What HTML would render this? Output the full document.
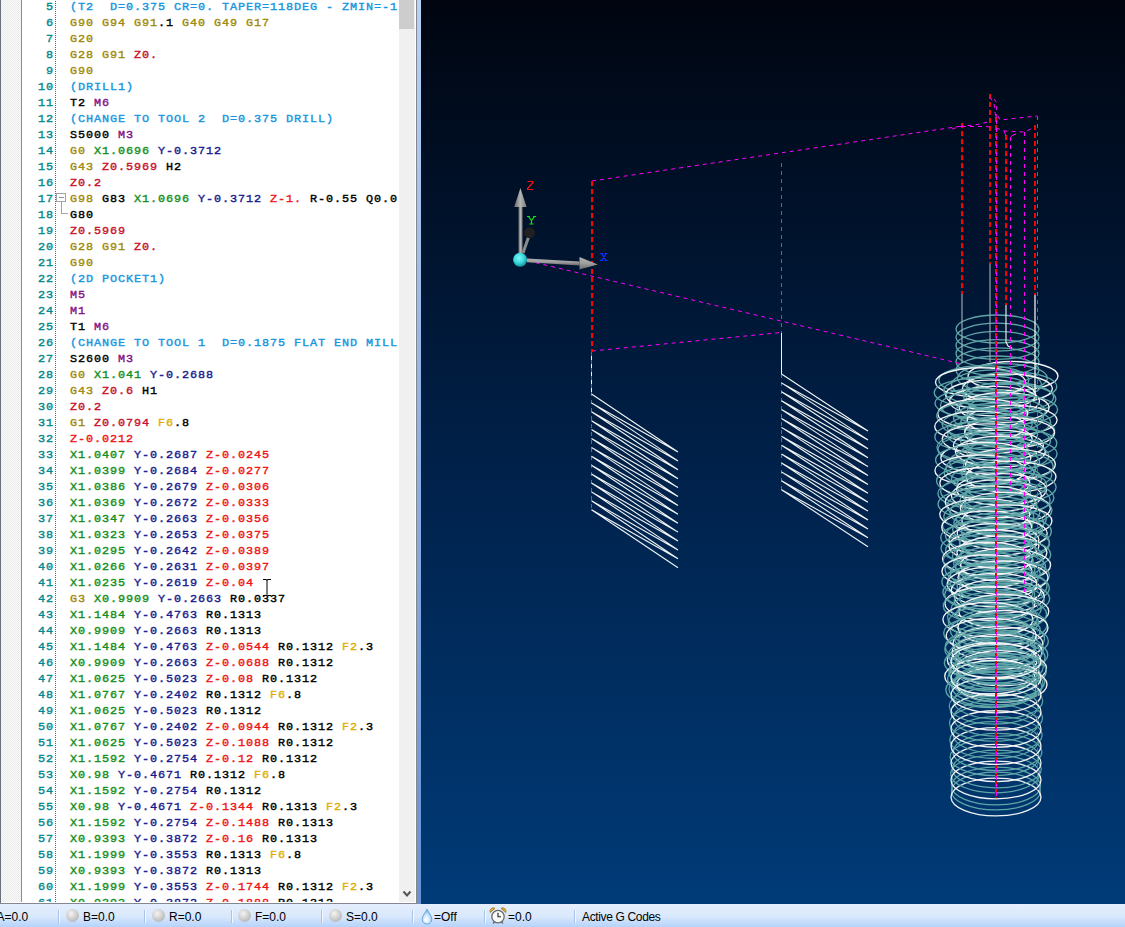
<!DOCTYPE html>
<html><head><meta charset="utf-8">
<style>
html,body{margin:0;padding:0;width:1125px;height:927px;overflow:hidden;background:#fff;}
body{position:relative;font-family:"Liberation Sans",sans-serif;}
#ed{position:absolute;left:0;top:0;width:416px;height:903px;background:#fff;overflow:hidden;}
#edb{position:absolute;left:0;top:0;width:1px;height:904px;background:#6d737c;}
#hatch{position:absolute;left:1px;top:0;width:20px;height:902px;background-color:#fcfcfc;
 background-image:linear-gradient(45deg,#e9e9e9 25%,transparent 25%,transparent 75%,#e9e9e9 75%),linear-gradient(45deg,#e9e9e9 25%,transparent 25%,transparent 75%,#e9e9e9 75%);
 background-size:2px 2px;background-position:0 0,1px 1px;}
#hl{position:absolute;left:21px;top:0;width:1px;height:902px;background:#8c8c8c;}
#dots{position:absolute;left:55px;top:0;width:1px;height:902px;background-image:linear-gradient(#008b8b 50%,transparent 50%);background-size:1px 2px;background-position:0 1px;}
#code{position:absolute;left:0;top:0;width:399px;height:902px;overflow:hidden;}
.ln{position:absolute;left:0;height:16px;white-space:pre;font-family:"Liberation Mono",monospace;font-size:11.8px;letter-spacing:0.92px;line-height:16px;color:#000;font-weight:normal;-webkit-text-stroke:0.4px currentColor}
.ln b{position:absolute;left:22px;width:32px;text-align:right;font-weight:normal;color:#008a8f;top:-1px}
.ln span{position:absolute;left:70px;top:-1px}
i{font-style:normal}
.c{color:#1596e0}
.g{color:#a08a08}
.f{color:#e0b000}
.x{color:#12901a}
.y{color:#1a1a90}
.zp{color:#c8102a}
.zn{color:#f01414}
.m{color:#841184}
#sb{position:absolute;left:399px;top:0;width:16px;height:902px;background:#f0f0f0;}
#thumb{position:absolute;left:0;top:0;width:15px;height:29px;background:#cdcdcd;}
#edbot{position:absolute;left:0;top:903px;width:417px;height:1px;background:#828790;}
#edr{position:absolute;left:416px;top:0;width:1px;height:904px;background:#828790;}
#split{position:absolute;left:417px;top:0;width:4px;height:904px;background:linear-gradient(#b8d2f4,#8db0e4 50%,#6893d0);}
#view{position:absolute;left:421px;top:0;width:704px;height:904px;background:linear-gradient(#000510,#002048 50%,#003b78);border-bottom:0}
#status{position:absolute;left:0;top:904px;width:1125px;height:23px;background:linear-gradient(#e4eefd,#d9e8fc 55%,#c6ddfb 78%,#b5d3fb);font-size:12px;color:#000;}
.st{position:absolute;top:6px;white-space:pre;font-size:12px;line-height:14px;}
.sep{position:absolute;top:6px;width:1px;height:13px;background:#a8c4e8;border-right:1px solid #f4f8fe;}
.dot{position:absolute;top:5px;width:13px;height:13px;border-radius:50%;background:radial-gradient(circle at 40% 35%,#f4f4f4,#c4c4c4 60%,#a8a8a8);}
</style></head><body>
<div id="ed">
 <div id="hatch"></div><div id="hl"></div><div id="dots"></div>
 <div id="code">
<div class="ln" style="top:0px"><b>5</b><span><i class="c">(T2  D=0.375 CR=0. TAPER=118DEG - ZMIN=-1</i></span></div>
<div class="ln" style="top:16px"><b>6</b><span><i class="g">G90</i> <i class="g">G94</i> <i class="g">G91</i>.1 <i class="g">G40</i> <i class="g">G49</i> <i class="g">G17</i></span></div>
<div class="ln" style="top:32px"><b>7</b><span><i class="g">G20</i></span></div>
<div class="ln" style="top:48px"><b>8</b><span><i class="g">G28</i> <i class="g">G91</i> <i class="zp">Z0.</i></span></div>
<div class="ln" style="top:64px"><b>9</b><span><i class="g">G90</i></span></div>
<div class="ln" style="top:80px"><b>10</b><span><i class="c">(DRILL1)</i></span></div>
<div class="ln" style="top:96px"><b>11</b><span>T2 <i class="m">M6</i></span></div>
<div class="ln" style="top:112px"><b>12</b><span><i class="c">(CHANGE TO TOOL 2  D=0.375 DRILL)</i></span></div>
<div class="ln" style="top:128px"><b>13</b><span>S5000 <i class="m">M3</i></span></div>
<div class="ln" style="top:144px"><b>14</b><span><i class="g">G0</i> <i class="x">X1.0696</i> <i class="y">Y-0.3712</i></span></div>
<div class="ln" style="top:160px"><b>15</b><span><i class="g">G43</i> <i class="zp">Z0.5969</i> H2</span></div>
<div class="ln" style="top:176px"><b>16</b><span><i class="zp">Z0.2</i></span></div>
<div class="ln" style="top:192px"><b>17</b><span><i class="g">G98</i> G83 <i class="x">X1.0696</i> <i class="y">Y-0.3712</i> <i class="zn">Z-1.</i> R-0.55 Q0.0</span></div>
<div class="ln" style="top:208px"><b>18</b><span>G80</span></div>
<div class="ln" style="top:224px"><b>19</b><span><i class="zp">Z0.5969</i></span></div>
<div class="ln" style="top:240px"><b>20</b><span><i class="g">G28</i> <i class="g">G91</i> <i class="zp">Z0.</i></span></div>
<div class="ln" style="top:256px"><b>21</b><span><i class="g">G90</i></span></div>
<div class="ln" style="top:272px"><b>22</b><span><i class="c">(2D POCKET1)</i></span></div>
<div class="ln" style="top:288px"><b>23</b><span><i class="m">M5</i></span></div>
<div class="ln" style="top:304px"><b>24</b><span><i class="m">M1</i></span></div>
<div class="ln" style="top:320px"><b>25</b><span>T1 <i class="m">M6</i></span></div>
<div class="ln" style="top:336px"><b>26</b><span><i class="c">(CHANGE TO TOOL 1  D=0.1875 FLAT END MILL</i></span></div>
<div class="ln" style="top:352px"><b>27</b><span>S2600 <i class="m">M3</i></span></div>
<div class="ln" style="top:368px"><b>28</b><span><i class="g">G0</i> <i class="x">X1.041</i> <i class="y">Y-0.2688</i></span></div>
<div class="ln" style="top:384px"><b>29</b><span><i class="g">G43</i> <i class="zp">Z0.6</i> H1</span></div>
<div class="ln" style="top:400px"><b>30</b><span><i class="zp">Z0.2</i></span></div>
<div class="ln" style="top:416px"><b>31</b><span><i class="g">G1</i> <i class="zp">Z0.0794</i> <i class="f">F6</i>.8</span></div>
<div class="ln" style="top:432px"><b>32</b><span><i class="zn">Z-0.0212</i></span></div>
<div class="ln" style="top:448px"><b>33</b><span><i class="x">X1.0407</i> <i class="y">Y-0.2687</i> <i class="zn">Z-0.0245</i></span></div>
<div class="ln" style="top:464px"><b>34</b><span><i class="x">X1.0399</i> <i class="y">Y-0.2684</i> <i class="zn">Z-0.0277</i></span></div>
<div class="ln" style="top:480px"><b>35</b><span><i class="x">X1.0386</i> <i class="y">Y-0.2679</i> <i class="zn">Z-0.0306</i></span></div>
<div class="ln" style="top:496px"><b>36</b><span><i class="x">X1.0369</i> <i class="y">Y-0.2672</i> <i class="zn">Z-0.0333</i></span></div>
<div class="ln" style="top:512px"><b>37</b><span><i class="x">X1.0347</i> <i class="y">Y-0.2663</i> <i class="zn">Z-0.0356</i></span></div>
<div class="ln" style="top:528px"><b>38</b><span><i class="x">X1.0323</i> <i class="y">Y-0.2653</i> <i class="zn">Z-0.0375</i></span></div>
<div class="ln" style="top:544px"><b>39</b><span><i class="x">X1.0295</i> <i class="y">Y-0.2642</i> <i class="zn">Z-0.0389</i></span></div>
<div class="ln" style="top:560px"><b>40</b><span><i class="x">X1.0266</i> <i class="y">Y-0.2631</i> <i class="zn">Z-0.0397</i></span></div>
<div class="ln" style="top:576px"><b>41</b><span><i class="x">X1.0235</i> <i class="y">Y-0.2619</i> <i class="zn">Z-0.04</i></span></div>
<div class="ln" style="top:592px"><b>42</b><span><i class="g">G3</i> <i class="x">X0.9909</i> <i class="y">Y-0.2663</i> R0.0337</span></div>
<div class="ln" style="top:608px"><b>43</b><span><i class="x">X1.1484</i> <i class="y">Y-0.4763</i> R0.1313</span></div>
<div class="ln" style="top:624px"><b>44</b><span><i class="x">X0.9909</i> <i class="y">Y-0.2663</i> R0.1313</span></div>
<div class="ln" style="top:640px"><b>45</b><span><i class="x">X1.1484</i> <i class="y">Y-0.4763</i> <i class="zn">Z-0.0544</i> R0.1312 <i class="f">F2</i>.3</span></div>
<div class="ln" style="top:656px"><b>46</b><span><i class="x">X0.9909</i> <i class="y">Y-0.2663</i> <i class="zn">Z-0.0688</i> R0.1312</span></div>
<div class="ln" style="top:672px"><b>47</b><span><i class="x">X1.0625</i> <i class="y">Y-0.5023</i> <i class="zn">Z-0.08</i> R0.1312</span></div>
<div class="ln" style="top:688px"><b>48</b><span><i class="x">X1.0767</i> <i class="y">Y-0.2402</i> R0.1312 <i class="f">F6</i>.8</span></div>
<div class="ln" style="top:704px"><b>49</b><span><i class="x">X1.0625</i> <i class="y">Y-0.5023</i> R0.1312</span></div>
<div class="ln" style="top:720px"><b>50</b><span><i class="x">X1.0767</i> <i class="y">Y-0.2402</i> <i class="zn">Z-0.0944</i> R0.1312 <i class="f">F2</i>.3</span></div>
<div class="ln" style="top:736px"><b>51</b><span><i class="x">X1.0625</i> <i class="y">Y-0.5023</i> <i class="zn">Z-0.1088</i> R0.1312</span></div>
<div class="ln" style="top:752px"><b>52</b><span><i class="x">X1.1592</i> <i class="y">Y-0.2754</i> <i class="zn">Z-0.12</i> R0.1312</span></div>
<div class="ln" style="top:768px"><b>53</b><span><i class="x">X0.98</i> <i class="y">Y-0.4671</i> R0.1312 <i class="f">F6</i>.8</span></div>
<div class="ln" style="top:784px"><b>54</b><span><i class="x">X1.1592</i> <i class="y">Y-0.2754</i> R0.1312</span></div>
<div class="ln" style="top:800px"><b>55</b><span><i class="x">X0.98</i> <i class="y">Y-0.4671</i> <i class="zn">Z-0.1344</i> R0.1313 <i class="f">F2</i>.3</span></div>
<div class="ln" style="top:816px"><b>56</b><span><i class="x">X1.1592</i> <i class="y">Y-0.2754</i> <i class="zn">Z-0.1488</i> R0.1313</span></div>
<div class="ln" style="top:832px"><b>57</b><span><i class="x">X0.9393</i> <i class="y">Y-0.3872</i> <i class="zn">Z-0.16</i> R0.1313</span></div>
<div class="ln" style="top:848px"><b>58</b><span><i class="x">X1.1999</i> <i class="y">Y-0.3553</i> R0.1313 <i class="f">F6</i>.8</span></div>
<div class="ln" style="top:864px"><b>59</b><span><i class="x">X0.9393</i> <i class="y">Y-0.3872</i> R0.1313</span></div>
<div class="ln" style="top:880px"><b>60</b><span><i class="x">X1.1999</i> <i class="y">Y-0.3553</i> <i class="zn">Z-0.1744</i> R0.1312 <i class="f">F2</i>.3</span></div>
<div class="ln" style="top:896px"><b>61</b><span><i class="x">X0.9393</i> <i class="y">Y-0.3872</i> <i class="zn">Z-0.1888</i> R0.1312</span></div>
 </div>
 <div id="sb"><div id="thumb"></div><svg style="position:absolute;left:3px;top:889px" width="10" height="10" viewBox="0 0 10 10"><path d="M1.5 2.5 L5 6.5 L8.5 2.5" fill="none" stroke="#555" stroke-width="2"/></svg></div>
 <div style="position:absolute;left:56px;top:193px;width:8px;height:7px;border:1px solid #a4a4a4;background:#fff"></div>
 <div style="position:absolute;left:59px;top:197px;width:5px;height:1px;background:#909090"></div>
 <div style="position:absolute;left:61px;top:202px;width:6px;height:11px;border-left:1px solid #a4a4a4;border-bottom:1px solid #a4a4a4"></div>
 <svg style="position:absolute;left:262px;top:578px" width="10" height="20" viewBox="0 0 10 20"><path d="M1 1.5h3.5M5.5 1.5H9M4.5 1.5Q5 2 5 3v13.5Q5 17 4.5 17.5M5 3Q5 2 5.5 1.5M1 17.5h3.5M5.5 17.5H9" fill="none" stroke="#000" stroke-width="1"/></svg>
</div>
<div id="edb"></div>
<div id="edbot"></div><div id="edr"></div>
<div id="split"></div>
<div id="view"><svg width="704" height="903" viewBox="421 0 704 903" style="position:absolute;left:0;top:0"><ellipse cx="997.5" cy="329.0" rx="41.5" ry="14" fill="none" stroke="#5fa6a8" stroke-width="1.3" opacity="1"/><ellipse cx="997.5" cy="337.2" rx="41.5" ry="14" fill="none" stroke="#5fa6a8" stroke-width="1.3" opacity="1"/><ellipse cx="997.5" cy="345.4" rx="41.5" ry="14" fill="none" stroke="#5fa6a8" stroke-width="1.3" opacity="1"/><ellipse cx="997.5" cy="353.6" rx="41.5" ry="14" fill="none" stroke="#5fa6a8" stroke-width="1.3" opacity="1"/><ellipse cx="997.5" cy="361.8" rx="41.5" ry="14" fill="none" stroke="#5fa6a8" stroke-width="1.3" opacity="1"/><ellipse cx="997.5" cy="370.0" rx="41.5" ry="14" fill="none" stroke="#5fa6a8" stroke-width="1.3" opacity="1"/><ellipse cx="1013.0" cy="376.0" rx="45" ry="14.5" fill="none" stroke="#f0f4f4" stroke-width="1.35" opacity="1"/><ellipse cx="1002.4" cy="378.1" rx="45" ry="14.522287735849057" fill="none" stroke="#5fa6a8" stroke-width="1.35" opacity="1"/><ellipse cx="983.8" cy="380.2" rx="45" ry="14.544575471698113" fill="none" stroke="#5fa6a8" stroke-width="1.35" opacity="1"/><ellipse cx="980.5" cy="382.3" rx="45" ry="14.56686320754717" fill="none" stroke="#f0f4f4" stroke-width="1.35" opacity="1"/><ellipse cx="996.5" cy="384.4" rx="45" ry="14.589150943396227" fill="none" stroke="#5fa6a8" stroke-width="1.35" opacity="1"/><ellipse cx="1011.8" cy="386.5" rx="45" ry="14.611438679245284" fill="none" stroke="#5fa6a8" stroke-width="1.35" opacity="1"/><ellipse cx="1007.4" cy="388.6" rx="45" ry="14.63372641509434" fill="none" stroke="#f0f4f4" stroke-width="1.35" opacity="1"/><ellipse cx="988.7" cy="390.7" rx="45" ry="14.656014150943397" fill="none" stroke="#5fa6a8" stroke-width="1.35" opacity="1"/><ellipse cx="979.2" cy="392.8" rx="45" ry="14.678301886792454" fill="none" stroke="#5fa6a8" stroke-width="1.35" opacity="1"/><ellipse cx="990.6" cy="394.9" rx="45" ry="14.700589622641512" fill="none" stroke="#f0f4f4" stroke-width="1.35" opacity="1"/><ellipse cx="1008.7" cy="397.0" rx="45" ry="14.72287735849057" fill="none" stroke="#5fa6a8" stroke-width="1.35" opacity="1"/><ellipse cx="1010.9" cy="399.1" rx="45" ry="14.745165094339626" fill="none" stroke="#5fa6a8" stroke-width="1.35" opacity="1"/><ellipse cx="994.5" cy="401.2" rx="45" ry="14.767452830188683" fill="none" stroke="#f0f4f4" stroke-width="1.35" opacity="1"/><ellipse cx="980.0" cy="403.3" rx="45" ry="14.78974056603774" fill="none" stroke="#5fa6a8" stroke-width="1.35" opacity="1"/><ellipse cx="985.5" cy="405.4" rx="45" ry="14.812028301886796" fill="none" stroke="#5fa6a8" stroke-width="1.35" opacity="1"/><ellipse cx="1004.1" cy="407.5" rx="45" ry="14.834316037735853" fill="none" stroke="#f0f4f4" stroke-width="1.35" opacity="1"/><ellipse cx="1012.6" cy="409.6" rx="45" ry="14.85660377358491" fill="none" stroke="#5fa6a8" stroke-width="1.35" opacity="1"/><ellipse cx="1000.4" cy="411.7" rx="45" ry="14.878891509433966" fill="none" stroke="#5fa6a8" stroke-width="1.35" opacity="1"/><ellipse cx="982.8" cy="413.8" rx="45" ry="14.901179245283023" fill="none" stroke="#f0f4f4" stroke-width="1.35" opacity="1"/><ellipse cx="981.7" cy="415.9" rx="45" ry="14.92346698113208" fill="none" stroke="#5fa6a8" stroke-width="1.35" opacity="1"/><ellipse cx="998.5" cy="418.0" rx="45" ry="14.945754716981137" fill="none" stroke="#5fa6a8" stroke-width="1.35" opacity="1"/><ellipse cx="1012.1" cy="420.1" rx="45" ry="14.968042452830193" fill="none" stroke="#f0f4f4" stroke-width="1.35" opacity="1"/><ellipse cx="1005.7" cy="422.2" rx="45" ry="14.99033018867925" fill="none" stroke="#5fa6a8" stroke-width="1.35" opacity="1"/><ellipse cx="987.2" cy="424.3" rx="45" ry="15.012617924528307" fill="none" stroke="#5fa6a8" stroke-width="1.35" opacity="1"/><ellipse cx="979.7" cy="426.4" rx="45" ry="15.034905660377364" fill="none" stroke="#f0f4f4" stroke-width="1.35" opacity="1"/><ellipse cx="992.6" cy="428.5" rx="45" ry="15.05719339622642" fill="none" stroke="#5fa6a8" stroke-width="1.35" opacity="1"/><ellipse cx="1009.7" cy="430.6" rx="45" ry="15.079481132075477" fill="none" stroke="#5fa6a8" stroke-width="1.35" opacity="1"/><ellipse cx="1009.6" cy="432.7" rx="45" ry="15.101768867924536" fill="none" stroke="#f0f4f4" stroke-width="1.35" opacity="1"/><ellipse cx="992.6" cy="434.8" rx="45" ry="15.124056603773592" fill="none" stroke="#5fa6a8" stroke-width="1.35" opacity="1"/><ellipse cx="979.8" cy="436.9" rx="45" ry="15.14634433962265" fill="none" stroke="#5fa6a8" stroke-width="1.35" opacity="1"/><ellipse cx="987.2" cy="439.0" rx="45" ry="15.168632075471706" fill="none" stroke="#f0f4f4" stroke-width="1.35" opacity="1"/><ellipse cx="1005.5" cy="441.1" rx="45" ry="15.190919811320763" fill="none" stroke="#5fa6a8" stroke-width="1.35" opacity="1"/><ellipse cx="1011.9" cy="443.2" rx="45" ry="15.21320754716982" fill="none" stroke="#5fa6a8" stroke-width="1.35" opacity="1"/><ellipse cx="998.4" cy="445.3" rx="45" ry="15.235495283018876" fill="none" stroke="#f0f4f4" stroke-width="1.35" opacity="1"/><ellipse cx="982.0" cy="447.4" rx="45" ry="15.257783018867933" fill="none" stroke="#5fa6a8" stroke-width="1.35" opacity="1"/><ellipse cx="983.0" cy="449.5" rx="45" ry="15.28007075471699" fill="none" stroke="#5fa6a8" stroke-width="1.35" opacity="1"/><ellipse cx="1000.3" cy="451.6" rx="45" ry="15.302358490566046" fill="none" stroke="#f0f4f4" stroke-width="1.35" opacity="1"/><ellipse cx="1012.1" cy="453.7" rx="45" ry="15.324646226415103" fill="none" stroke="#5fa6a8" stroke-width="1.35" opacity="1"/><ellipse cx="1003.8" cy="455.8" rx="45" ry="15.34693396226416" fill="none" stroke="#5fa6a8" stroke-width="1.35" opacity="1"/><ellipse cx="985.8" cy="457.9" rx="45" ry="15.369221698113217" fill="none" stroke="#f0f4f4" stroke-width="1.35" opacity="1"/><ellipse cx="980.5" cy="460.0" rx="45" ry="15.391509433962273" fill="none" stroke="#5fa6a8" stroke-width="1.35" opacity="1"/><ellipse cx="994.6" cy="462.1" rx="45" ry="15.41379716981133" fill="none" stroke="#5fa6a8" stroke-width="1.35" opacity="1"/><ellipse cx="1010.4" cy="464.2" rx="45" ry="15.436084905660387" fill="none" stroke="#f0f4f4" stroke-width="1.35" opacity="1"/><ellipse cx="1008.2" cy="466.3" rx="45" ry="15.458372641509444" fill="none" stroke="#5fa6a8" stroke-width="1.35" opacity="1"/><ellipse cx="990.8" cy="468.4" rx="45" ry="15.4806603773585" fill="none" stroke="#5fa6a8" stroke-width="1.35" opacity="1"/><ellipse cx="979.9" cy="470.5" rx="45" ry="15.502948113207559" fill="none" stroke="#f0f4f4" stroke-width="1.35" opacity="1"/><ellipse cx="989.1" cy="472.6" rx="45" ry="15.525235849056616" fill="none" stroke="#5fa6a8" stroke-width="1.35" opacity="1"/><ellipse cx="1006.8" cy="474.7" rx="45" ry="15.547523584905672" fill="none" stroke="#5fa6a8" stroke-width="1.35" opacity="1"/><ellipse cx="1011.0" cy="476.8" rx="45" ry="15.569811320754729" fill="none" stroke="#f0f4f4" stroke-width="1.35" opacity="1"/><ellipse cx="996.5" cy="478.9" rx="45" ry="15.592099056603786" fill="none" stroke="#5fa6a8" stroke-width="1.35" opacity="1"/><ellipse cx="981.5" cy="481.0" rx="45" ry="15.614386792452843" fill="none" stroke="#5fa6a8" stroke-width="1.35" opacity="1"/><ellipse cx="984.8" cy="483.1" rx="45" ry="15.6366745283019" fill="none" stroke="#f0f4f4" stroke-width="1.35" opacity="1"/><ellipse cx="1001.8" cy="485.2" rx="45" ry="15.658962264150956" fill="none" stroke="#5fa6a8" stroke-width="1.35" opacity="1"/><ellipse cx="1011.1" cy="487.3" rx="45" ry="15.681250000000013" fill="none" stroke="#5fa6a8" stroke-width="1.35" opacity="1"/><ellipse cx="1001.6" cy="489.4" rx="45" ry="15.70353773584907" fill="none" stroke="#f0f4f4" stroke-width="1.35" opacity="1"/><ellipse cx="985.6" cy="491.5" rx="45" ry="15.725825471698126" fill="none" stroke="#5fa6a8" stroke-width="1.35" opacity="1"/><ellipse cx="982.9" cy="493.6" rx="45" ry="15.748113207547183" fill="none" stroke="#5fa6a8" stroke-width="1.35" opacity="1"/><ellipse cx="996.4" cy="495.7" rx="45" ry="15.77040094339624" fill="none" stroke="#f0f4f4" stroke-width="1.35" opacity="1"/><ellipse cx="1008.9" cy="497.8" rx="45" ry="15.792688679245297" fill="none" stroke="#5fa6a8" stroke-width="1.35" opacity="1"/><ellipse cx="1005.1" cy="499.9" rx="45" ry="15.814976415094353" fill="none" stroke="#5fa6a8" stroke-width="1.35" opacity="1"/><ellipse cx="990.3" cy="502.0" rx="45" ry="15.83726415094341" fill="none" stroke="#f0f4f4" stroke-width="1.35" opacity="1"/><ellipse cx="983.0" cy="504.1" rx="45" ry="15.859551886792467" fill="none" stroke="#5fa6a8" stroke-width="1.35" opacity="1"/><ellipse cx="991.9" cy="506.2" rx="45" ry="15.881839622641525" fill="none" stroke="#5fa6a8" stroke-width="1.35" opacity="1"/><ellipse cx="1005.4" cy="508.3" rx="45" ry="15.90412735849058" fill="none" stroke="#f0f4f4" stroke-width="1.35" opacity="1"/><ellipse cx="1006.9" cy="510.4" rx="45" ry="15.926415094339639" fill="none" stroke="#5fa6a8" stroke-width="1.35" opacity="1"/><ellipse cx="994.9" cy="512.5" rx="45" ry="15.948702830188696" fill="none" stroke="#5fa6a8" stroke-width="1.35" opacity="1"/><ellipse cx="984.8" cy="514.6" rx="45" ry="15.970990566037752" fill="none" stroke="#f0f4f4" stroke-width="1.35" opacity="1"/><ellipse cx="988.8" cy="516.7" rx="45" ry="15.993278301886809" fill="none" stroke="#5fa6a8" stroke-width="1.35" opacity="1"/><ellipse cx="1001.4" cy="518.8" rx="45" ry="16.015566037735866" fill="none" stroke="#5fa6a8" stroke-width="1.35" opacity="1"/><ellipse cx="1006.9" cy="520.9" rx="45" ry="16.03785377358492" fill="none" stroke="#f0f4f4" stroke-width="1.35" opacity="1"/><ellipse cx="998.9" cy="523.0" rx="45" ry="16.06014150943398" fill="none" stroke="#5fa6a8" stroke-width="1.35" opacity="1"/><ellipse cx="987.4" cy="525.1" rx="45" ry="16.082429245283038" fill="none" stroke="#5fa6a8" stroke-width="1.35" opacity="1"/><ellipse cx="986.7" cy="527.2" rx="45" ry="16.104716981132093" fill="none" stroke="#f0f4f4" stroke-width="1.35" opacity="1"/><ellipse cx="997.6" cy="529.3" rx="45" ry="16.12700471698115" fill="none" stroke="#5fa6a8" stroke-width="1.35" opacity="1"/><ellipse cx="1006.4" cy="531.4" rx="45" ry="16.149292452830206" fill="none" stroke="#5fa6a8" stroke-width="1.35" opacity="1"/><ellipse cx="1002.2" cy="533.5" rx="45" ry="16.171580188679265" fill="none" stroke="#f0f4f4" stroke-width="1.35" opacity="1"/><ellipse cx="990.4" cy="535.6" rx="45" ry="16.19386792452832" fill="none" stroke="#5fa6a8" stroke-width="1.35" opacity="1"/><ellipse cx="985.7" cy="537.7" rx="45" ry="16.216155660377378" fill="none" stroke="#5fa6a8" stroke-width="1.35" opacity="1"/><ellipse cx="993.9" cy="539.8" rx="45" ry="16.238443396226433" fill="none" stroke="#f0f4f4" stroke-width="1.35" opacity="1"/><ellipse cx="1004.6" cy="541.9" rx="45" ry="16.26073113207549" fill="none" stroke="#5fa6a8" stroke-width="1.35" opacity="1"/><ellipse cx="1004.5" cy="544.0" rx="45" ry="16.283018867924547" fill="none" stroke="#5fa6a8" stroke-width="1.35" opacity="1"/><ellipse cx="993.9" cy="546.1" rx="45" ry="16.305306603773605" fill="none" stroke="#f0f4f4" stroke-width="1.35" opacity="1"/><ellipse cx="986.0" cy="548.2" rx="45" ry="16.32759433962266" fill="none" stroke="#5fa6a8" stroke-width="1.35" opacity="1"/><ellipse cx="990.6" cy="550.3" rx="45" ry="16.34988207547172" fill="none" stroke="#5fa6a8" stroke-width="1.35" opacity="1"/><ellipse cx="1001.9" cy="552.4" rx="45" ry="16.372169811320774" fill="none" stroke="#f0f4f4" stroke-width="1.35" opacity="1"/><ellipse cx="1005.7" cy="554.5" rx="45" ry="16.394457547169832" fill="none" stroke="#5fa6a8" stroke-width="1.35" opacity="1"/><ellipse cx="997.5" cy="556.6" rx="45" ry="16.416745283018887" fill="none" stroke="#5fa6a8" stroke-width="1.35" opacity="1"/><ellipse cx="987.5" cy="558.7" rx="45" ry="16.439033018867946" fill="none" stroke="#f0f4f4" stroke-width="1.35" opacity="1"/><ellipse cx="988.2" cy="560.8" rx="45" ry="16.461320754717" fill="none" stroke="#5fa6a8" stroke-width="1.35" opacity="1"/><ellipse cx="998.6" cy="562.9" rx="45" ry="16.48360849056606" fill="none" stroke="#5fa6a8" stroke-width="1.35" opacity="1"/><ellipse cx="1005.6" cy="565.0" rx="45" ry="16.505896226415118" fill="none" stroke="#f0f4f4" stroke-width="1.35" opacity="1"/><ellipse cx="1000.6" cy="567.1" rx="45" ry="16.528183962264173" fill="none" stroke="#5fa6a8" stroke-width="1.35" opacity="1"/><ellipse cx="990.0" cy="569.2" rx="45" ry="16.55047169811323" fill="none" stroke="#5fa6a8" stroke-width="1.35" opacity="1"/><ellipse cx="986.9" cy="571.3" rx="45" ry="16.572759433962286" fill="none" stroke="#f0f4f4" stroke-width="1.35" opacity="1"/><ellipse cx="995.2" cy="573.4" rx="45" ry="16.595047169811345" fill="none" stroke="#5fa6a8" stroke-width="1.35" opacity="1"/><ellipse cx="1004.3" cy="575.5" rx="45" ry="16.6173349056604" fill="none" stroke="#5fa6a8" stroke-width="1.35" opacity="1"/><ellipse cx="1003.0" cy="577.6" rx="45" ry="16.639622641509458" fill="none" stroke="#f0f4f4" stroke-width="1.35" opacity="1"/><ellipse cx="993.0" cy="579.7" rx="45" ry="16.661910377358513" fill="none" stroke="#5fa6a8" stroke-width="1.35" opacity="1"/><ellipse cx="986.8" cy="581.8" rx="45" ry="16.68419811320757" fill="none" stroke="#5fa6a8" stroke-width="1.35" opacity="1"/><ellipse cx="992.1" cy="583.9" rx="45" ry="16.706485849056627" fill="none" stroke="#f0f4f4" stroke-width="1.35" opacity="1"/><ellipse cx="1002.1" cy="586.0" rx="45" ry="16.728773584905685" fill="none" stroke="#5fa6a8" stroke-width="1.35" opacity="1"/><ellipse cx="1004.4" cy="588.1" rx="45" ry="16.75106132075474" fill="none" stroke="#5fa6a8" stroke-width="1.35" opacity="1"/><ellipse cx="996.3" cy="590.2" rx="45" ry="16.7733490566038" fill="none" stroke="#f0f4f4" stroke-width="1.35" opacity="1"/><ellipse cx="987.9" cy="592.3" rx="45" ry="16.795636792452854" fill="none" stroke="#5fa6a8" stroke-width="1.35" opacity="1"/><ellipse cx="989.7" cy="594.4" rx="45" ry="16.817924528301912" fill="none" stroke="#5fa6a8" stroke-width="1.35" opacity="1"/><ellipse cx="999.3" cy="596.5" rx="45" ry="16.84021226415097" fill="none" stroke="#f0f4f4" stroke-width="1.35" opacity="1"/><ellipse cx="1004.7" cy="598.6" rx="45" ry="16.862500000000026" fill="none" stroke="#5fa6a8" stroke-width="1.35" opacity="1"/><ellipse cx="999.2" cy="600.7" rx="45" ry="16.88478773584908" fill="none" stroke="#5fa6a8" stroke-width="1.35" opacity="1"/><ellipse cx="989.9" cy="603.4" rx="45" ry="16.91344339622644" fill="none" stroke="#f0f4f4" stroke-width="1.35" opacity="1"/><ellipse cx="988.3" cy="606.1" rx="45" ry="16.9420990566038" fill="none" stroke="#5fa6a8" stroke-width="1.35" opacity="1"/><ellipse cx="996.2" cy="608.8" rx="45" ry="16.97075471698116" fill="none" stroke="#5fa6a8" stroke-width="1.35" opacity="1"/><ellipse cx="1003.8" cy="611.5" rx="45" ry="16.99941037735852" fill="none" stroke="#f0f4f4" stroke-width="1.35" opacity="1"/><ellipse cx="1001.6" cy="614.2" rx="45" ry="17.028066037735876" fill="none" stroke="#5fa6a8" stroke-width="1.35" opacity="1"/><ellipse cx="992.5" cy="616.9" rx="45" ry="17.056721698113236" fill="none" stroke="#5fa6a8" stroke-width="1.35" opacity="1"/><ellipse cx="987.9" cy="619.6" rx="45" ry="17.085377358490597" fill="none" stroke="#f0f4f4" stroke-width="1.35" opacity="1"/><ellipse cx="993.4" cy="622.3" rx="45" ry="17.114033018867953" fill="none" stroke="#5fa6a8" stroke-width="1.35" opacity="1"/><ellipse cx="1002.0" cy="625.0" rx="45" ry="17.142688679245314" fill="none" stroke="#5fa6a8" stroke-width="1.35" opacity="1"/><ellipse cx="1003.0" cy="627.7" rx="45" ry="17.17134433962267" fill="none" stroke="#f0f4f4" stroke-width="1.35" opacity="1"/><ellipse cx="995.3" cy="630.4" rx="45" ry="17.20000000000003" fill="none" stroke="#5fa6a8" stroke-width="1.35" opacity="1"/><ellipse cx="988.7" cy="633.1" rx="45" ry="17.22865566037739" fill="none" stroke="#5fa6a8" stroke-width="1.35" opacity="1"/><ellipse cx="991.2" cy="635.8" rx="45" ry="17.25731132075475" fill="none" stroke="#f0f4f4" stroke-width="1.35" opacity="1"/><ellipse cx="999.6" cy="638.5" rx="45" ry="17.28596698113211" fill="none" stroke="#5fa6a8" stroke-width="1.35" opacity="1"/><ellipse cx="1003.4" cy="641.2" rx="45" ry="17.314622641509466" fill="none" stroke="#5fa6a8" stroke-width="1.35" opacity="1"/><ellipse cx="997.9" cy="643.9" rx="45" ry="17.343278301886826" fill="none" stroke="#f0f4f4" stroke-width="1.35" opacity="1"/><ellipse cx="990.2" cy="646.6" rx="45" ry="17.371933962264187" fill="none" stroke="#5fa6a8" stroke-width="1.35" opacity="1"/><ellipse cx="989.8" cy="649.3" rx="45" ry="17.400589622641544" fill="none" stroke="#5fa6a8" stroke-width="1.35" opacity="1"/><ellipse cx="997.1" cy="652.0" rx="45" ry="17.429245283018904" fill="none" stroke="#f0f4f4" stroke-width="1.35" opacity="1"/><ellipse cx="1002.8" cy="654.7" rx="45" ry="17.45790094339626" fill="none" stroke="#5fa6a8" stroke-width="1.35" opacity="1"/><ellipse cx="1000.1" cy="657.4" rx="45" ry="17.48655660377362" fill="none" stroke="#5fa6a8" stroke-width="1.35" opacity="1"/><ellipse cx="992.3" cy="660.1" rx="45" ry="17.51521226415098" fill="none" stroke="#f0f4f4" stroke-width="1.35" opacity="1"/><ellipse cx="989.3" cy="662.8" rx="45" ry="17.54386792452834" fill="none" stroke="#5fa6a8" stroke-width="1.35" opacity="1"/><ellipse cx="994.6" cy="665.5" rx="45" ry="17.572523584905696" fill="none" stroke="#5fa6a8" stroke-width="1.35" opacity="1"/><ellipse cx="1001.5" cy="668.2" rx="45" ry="17.601179245283056" fill="none" stroke="#f0f4f4" stroke-width="1.35" opacity="1"/><ellipse cx="1001.4" cy="670.9" rx="45" ry="17.629834905660417" fill="none" stroke="#5fa6a8" stroke-width="1.35" opacity="1"/><ellipse cx="994.7" cy="673.6" rx="45" ry="17.658490566037774" fill="none" stroke="#5fa6a8" stroke-width="1.35" opacity="1"/><ellipse cx="989.7" cy="676.3" rx="45" ry="17.687146226415134" fill="none" stroke="#f0f4f4" stroke-width="1.35" opacity="1"/><ellipse cx="992.6" cy="679.0" rx="45" ry="17.71580188679249" fill="none" stroke="#5fa6a8" stroke-width="1.35" opacity="1"/><ellipse cx="999.6" cy="681.7" rx="45" ry="17.74445754716985" fill="none" stroke="#5fa6a8" stroke-width="1.35" opacity="1"/><ellipse cx="1002.0" cy="684.4" rx="45" ry="17.773113207547212" fill="none" stroke="#f0f4f4" stroke-width="1.35" opacity="1"/><ellipse cx="996.9" cy="687.1" rx="45" ry="17.80176886792457" fill="none" stroke="#5fa6a8" stroke-width="1.35" opacity="1"/><ellipse cx="990.8" cy="689.8" rx="45" ry="17.83042452830193" fill="none" stroke="#5fa6a8" stroke-width="1.35" opacity="1"/><ellipse cx="995.9" cy="791.0" rx="44.5" ry="18.96816037735849" fill="none" stroke="#5fa6a8" stroke-width="1.2" opacity="1"/><ellipse cx="996.1" cy="786.0" rx="44.5" ry="18.96816037735849" fill="none" stroke="#5fa6a8" stroke-width="1.2" opacity="1"/><ellipse cx="996.0" cy="797.0" rx="45" ry="18.96816037735849" fill="none" stroke="#f0f4f4" stroke-width="1.3" opacity="1"/><ellipse cx="995.2" cy="774.0" rx="44.5" ry="18.787735849056602" fill="none" stroke="#5fa6a8" stroke-width="1.2" opacity="1"/><ellipse cx="996.8" cy="769.0" rx="44.5" ry="18.787735849056602" fill="none" stroke="#5fa6a8" stroke-width="1.2" opacity="1"/><ellipse cx="996.0" cy="780.0" rx="45" ry="18.787735849056602" fill="none" stroke="#f0f4f4" stroke-width="1.3" opacity="1"/><ellipse cx="994.6" cy="757.0" rx="44.5" ry="18.607311320754718" fill="none" stroke="#5fa6a8" stroke-width="1.2" opacity="1"/><ellipse cx="997.4" cy="752.0" rx="44.5" ry="18.607311320754718" fill="none" stroke="#5fa6a8" stroke-width="1.2" opacity="1"/><ellipse cx="996.0" cy="763.0" rx="45" ry="18.607311320754718" fill="none" stroke="#f0f4f4" stroke-width="1.3" opacity="1"/><ellipse cx="994.3" cy="740.0" rx="44.5" ry="18.42688679245283" fill="none" stroke="#5fa6a8" stroke-width="1.2" opacity="1"/><ellipse cx="997.7" cy="735.0" rx="44.5" ry="18.42688679245283" fill="none" stroke="#5fa6a8" stroke-width="1.2" opacity="1"/><ellipse cx="996.0" cy="746.0" rx="45" ry="18.42688679245283" fill="none" stroke="#f0f4f4" stroke-width="1.3" opacity="1"/><ellipse cx="994.0" cy="723.0" rx="44.5" ry="18.246462264150942" fill="none" stroke="#5fa6a8" stroke-width="1.2" opacity="1"/><ellipse cx="998.0" cy="718.0" rx="44.5" ry="18.246462264150942" fill="none" stroke="#5fa6a8" stroke-width="1.2" opacity="1"/><ellipse cx="996.0" cy="729.0" rx="45" ry="18.246462264150942" fill="none" stroke="#f0f4f4" stroke-width="1.3" opacity="1"/><ellipse cx="993.8" cy="706.0" rx="44.5" ry="18.066037735849058" fill="none" stroke="#5fa6a8" stroke-width="1.2" opacity="1"/><ellipse cx="998.2" cy="701.0" rx="44.5" ry="18.066037735849058" fill="none" stroke="#5fa6a8" stroke-width="1.2" opacity="1"/><ellipse cx="996.0" cy="712.0" rx="45" ry="18.066037735849058" fill="none" stroke="#f0f4f4" stroke-width="1.3" opacity="1"/><ellipse cx="993.5" cy="689.0" rx="44.5" ry="17.88561320754717" fill="none" stroke="#5fa6a8" stroke-width="1.2" opacity="1"/><ellipse cx="998.5" cy="684.0" rx="44.5" ry="17.88561320754717" fill="none" stroke="#5fa6a8" stroke-width="1.2" opacity="1"/><ellipse cx="996.0" cy="695.0" rx="45" ry="17.88561320754717" fill="none" stroke="#f0f4f4" stroke-width="1.3" opacity="1"/><ellipse cx="993.3" cy="672.0" rx="44.5" ry="17.705188679245282" fill="none" stroke="#5fa6a8" stroke-width="1.2" opacity="1"/><ellipse cx="998.7" cy="667.0" rx="44.5" ry="17.705188679245282" fill="none" stroke="#5fa6a8" stroke-width="1.2" opacity="1"/><ellipse cx="996.0" cy="678.0" rx="45" ry="17.705188679245282" fill="none" stroke="#f0f4f4" stroke-width="1.3" opacity="1"/><ellipse cx="993.0" cy="655.0" rx="44.5" ry="17.524764150943398" fill="none" stroke="#5fa6a8" stroke-width="1.2" opacity="1"/><ellipse cx="999.0" cy="650.0" rx="44.5" ry="17.524764150943398" fill="none" stroke="#5fa6a8" stroke-width="1.2" opacity="1"/><ellipse cx="996.0" cy="661.0" rx="45" ry="17.524764150943398" fill="none" stroke="#f0f4f4" stroke-width="1.3" opacity="1"/><line x1="592" y1="181" x2="962" y2="126" stroke="#ff00ff" stroke-width="1" stroke-dasharray="4 4"/><line x1="520" y1="259" x2="962" y2="364" stroke="#ff00ff" stroke-width="1" stroke-dasharray="4 4"/><line x1="592" y1="351" x2="781.5" y2="332.5" stroke="#ff00ff" stroke-width="1" stroke-dasharray="4 4"/><line x1="781.5" y1="163" x2="781.5" y2="333" stroke="#ff00ff" stroke-width="1" stroke-dasharray="4 4"/><line x1="781.5" y1="333" x2="781.5" y2="374" stroke="#f0f4f4" stroke-width="1"/><line x1="591.5" y1="352" x2="591.5" y2="394" stroke="#f0f4f4" stroke-width="1"/><line x1="591.5" y1="352" x2="591.5" y2="512" stroke="#ff00ff" stroke-width="1" stroke-dasharray="4 4"/><line x1="781.5" y1="374" x2="781.5" y2="493" stroke="#ff00ff" stroke-width="1" stroke-dasharray="4 4"/><line x1="592" y1="181" x2="592" y2="352" stroke="#ff0000" stroke-width="2" stroke-dasharray="5 3"/><line x1="962" y1="123" x2="962" y2="294" stroke="#ff0000" stroke-width="2" stroke-dasharray="5 3"/><line x1="962" y1="294" x2="962" y2="363" stroke="#98a4a8" stroke-width="1.2"/><line x1="990" y1="94" x2="990" y2="264" stroke="#ff0000" stroke-width="2" stroke-dasharray="5 3"/><line x1="990" y1="264" x2="990" y2="362" stroke="#98a4a8" stroke-width="1.2"/><line x1="1006" y1="135" x2="1006" y2="305" stroke="#ff0000" stroke-width="2" stroke-dasharray="5 3"/><polyline points="1006.0,305.0 1006.0,342.0 1008.0,346.0 1012.0,348.0" fill="none" stroke="#f0f4f4" stroke-width="1.1"/><line x1="1035" y1="125" x2="1035" y2="295" stroke="#ff0000" stroke-width="2" stroke-dasharray="5 3"/><line x1="1035" y1="295" x2="1035" y2="392" stroke="#ffffff" stroke-width="1.2"/><line x1="996" y1="117" x2="996" y2="798" stroke="#ff0000" stroke-width="2" stroke-dasharray="5 3"/><line x1="996.5" y1="120" x2="996.5" y2="798" stroke="#ff00ff" stroke-width="1" stroke-dasharray="4 4"/><line x1="1010.5" y1="137" x2="1010.5" y2="491" stroke="#ff00ff" stroke-width="1" stroke-dasharray="4 4"/><line x1="1024.5" y1="132" x2="1024.5" y2="593" stroke="#ff00ff" stroke-width="1" stroke-dasharray="4 4"/><line x1="1037.5" y1="116" x2="1037.5" y2="790" stroke="#ff00ff" stroke-width="1" stroke-dasharray="4 4"/><polyline points="952.0,129.0 962.0,126.0 975.0,125.0 988.0,122.0" fill="none" stroke="#ff00ff" stroke-width="1" stroke-dasharray="4 4"/><polyline points="962.0,126.5 985.0,126.5 992.0,127.0" fill="none" stroke="#ff00ff" stroke-width="1" stroke-dasharray="4 4"/><polyline points="990.0,97.0 994.0,104.0 996.0,120.0" fill="none" stroke="#ff00ff" stroke-width="1" stroke-dasharray="4 4"/><polyline points="994.0,99.0 997.0,103.0 996.0,120.0" fill="none" stroke="#ff00ff" stroke-width="1" stroke-dasharray="4 4"/><polyline points="998.0,116.0 1000.0,120.0 1037.0,116.0" fill="none" stroke="#ff00ff" stroke-width="1" stroke-dasharray="4 4"/><polyline points="996.0,128.0 1005.0,131.0 1024.0,132.0 1031.0,129.0" fill="none" stroke="#ff00ff" stroke-width="1" stroke-dasharray="4 4"/><polyline points="1004.0,131.0 1006.0,136.0" fill="none" stroke="#ff00ff" stroke-width="1"/><polyline points="1010.0,138.0 1013.0,135.0 1016.0,134.0" fill="none" stroke="#ff00ff" stroke-width="1"/><polyline points="591.5,394.0 678.0,452.0 591.5,402.9 678.0,460.9 591.5,411.8 678.0,469.8 591.5,420.7 678.0,478.7 591.5,429.6 678.0,487.6 591.5,438.5 678.0,496.5 591.5,447.4 678.0,505.4 591.5,456.3 678.0,514.3 591.5,465.2 678.0,523.2 591.5,474.1 678.0,532.1 591.5,483.0 678.0,541.0 591.5,491.9 678.0,549.9 591.5,500.8 678.0,558.8 591.5,509.7 678.0,567.7" fill="none" stroke="#f0f4f4" stroke-width="1.1"/><polyline points="781.5,374.0 868.0,431.0 781.5,382.9 868.0,439.9 781.5,391.8 868.0,448.8 781.5,400.7 868.0,457.7 781.5,409.6 868.0,466.6 781.5,418.5 868.0,475.5 781.5,427.4 868.0,484.4 781.5,436.3 868.0,493.3 781.5,445.2 868.0,502.2 781.5,454.1 868.0,511.1 781.5,463.0 868.0,520.0 781.5,471.9 868.0,528.9 781.5,480.8 868.0,537.8 781.5,489.7 868.0,546.7" fill="none" stroke="#f0f4f4" stroke-width="1.1"/><defs><radialGradient id="sph" cx="0.42" cy="0.38" r="0.6"><stop offset="0" stop-color="#7ff8f8"/><stop offset="0.6" stop-color="#38d8dc"/><stop offset="1" stop-color="#1a9aa0"/></radialGradient><linearGradient id="shz" x1="0" x2="1"><stop offset="0" stop-color="#6a6a6a"/><stop offset="0.5" stop-color="#b4b4b4"/><stop offset="1" stop-color="#7a7a7a"/></linearGradient><linearGradient id="shx" x1="0" y1="0" x2="0" y2="1"><stop offset="0" stop-color="#b0b0b0"/><stop offset="0.5" stop-color="#a0a0a0"/><stop offset="1" stop-color="#6a6a6a"/></linearGradient></defs><rect x="518.5" y="206" width="4" height="54" fill="url(#shz)"/><polygon points="520.4,188 526.6,207 514.2,207" fill="url(#shz)"/><line x1="523" y1="253" x2="530" y2="233" stroke="#8a8a8a" stroke-width="3"/><circle cx="529.6" cy="232.7" r="5.5" fill="#202020"/><polygon points="527,258.4 579.5,261.5 579.5,265.5 527,262.2" fill="url(#shx)"/><polygon points="579.5,257 597.8,264.5 579.5,269.4" fill="url(#shx)"/><circle cx="520.1" cy="259.7" r="7" fill="url(#sph)"/><path d="M527.5 181.5h5.5v1l-5.5 6v1h5.8" fill="none" stroke="#ff1010" stroke-width="1.2"/><path d="M527 216.5h3M533 216.5h3M528.5 216.5l3 4l3-4M531.5 220.5v3.5M529.5 224h4" fill="none" stroke="#10e010" stroke-width="1.2"/><path d="M600 253.5h3M604.5 253.5h3M601.5 253.5l4.5 7M606 253.5l-4.5 7M600 260.5h3M604.5 260.5h3" fill="none" stroke="#1030ff" stroke-width="1.2"/></svg></div>
<div id="status">
 <div class="st" style="left:-3.5px">A=0.0</div>
 <span class="sep" style="left:58px"></span>
 <span class="dot" style="left:66px"></span>
 <div class="st" style="left:83px">B=0.0</div>
 <span class="sep" style="left:144px"></span>
 <span class="dot" style="left:152px"></span>
 <div class="st" style="left:169px">R=0.0</div>
 <span class="sep" style="left:231px"></span>
 <span class="dot" style="left:238px"></span>
 <div class="st" style="left:255px">F=0.0</div>
 <span class="sep" style="left:321px"></span>
 <span class="dot" style="left:329px"></span>
 <div class="st" style="left:346px">S=0.0</div>
 <span class="sep" style="left:412px"></span>
 <svg style="position:absolute;left:420px;top:4px" width="14" height="17" viewBox="0 0 14 17"><defs><radialGradient id="dr" cx="0.45" cy="0.7" r="0.6"><stop offset="0" stop-color="#ffffff"/><stop offset="0.55" stop-color="#cfe8fb"/><stop offset="1" stop-color="#7ab8e8"/></radialGradient></defs><path d="M7 1.2 C6 3.5 2.2 8 2.2 11.2 A4.8 4.8 0 0 0 11.8 11.2 C11.8 8 8 3.5 7 1.2Z" fill="url(#dr)" stroke="#5fa2dc" stroke-width="0.9"/><ellipse cx="5.3" cy="12" rx="1" ry="1.6" fill="#fff" opacity="0.9"/></svg>
 <div class="st" style="left:434px">=Off</div>
 <span class="sep" style="left:484px"></span>
 <svg style="position:absolute;left:489px;top:3px" width="18" height="18" viewBox="0 0 18 18"><path d="M1.2 5.5 A3.4 3.4 0 0 1 6 1.3Z" fill="#e6b43c" stroke="#9a7020" stroke-width="0.8"/><path d="M16.8 5.5 A3.4 3.4 0 0 0 12 1.3Z" fill="#e6b43c" stroke="#9a7020" stroke-width="0.8"/><path d="M4 16.5l1.8-2M14 16.5l-1.8-2" stroke="#666" stroke-width="1.3"/><circle cx="9" cy="9.6" r="6.2" fill="#fafaf6" stroke="#6a6a6a" stroke-width="1.3"/><path d="M9 5.8v4h3" fill="none" stroke="#222" stroke-width="1.1"/></svg>
 <div class="st" style="left:508px">=0.0</div>
 <span class="sep" style="left:574px"></span>
 <div class="st" style="left:582px;letter-spacing:-0.35px">Active G Codes</div>
</div>
</body></html>
